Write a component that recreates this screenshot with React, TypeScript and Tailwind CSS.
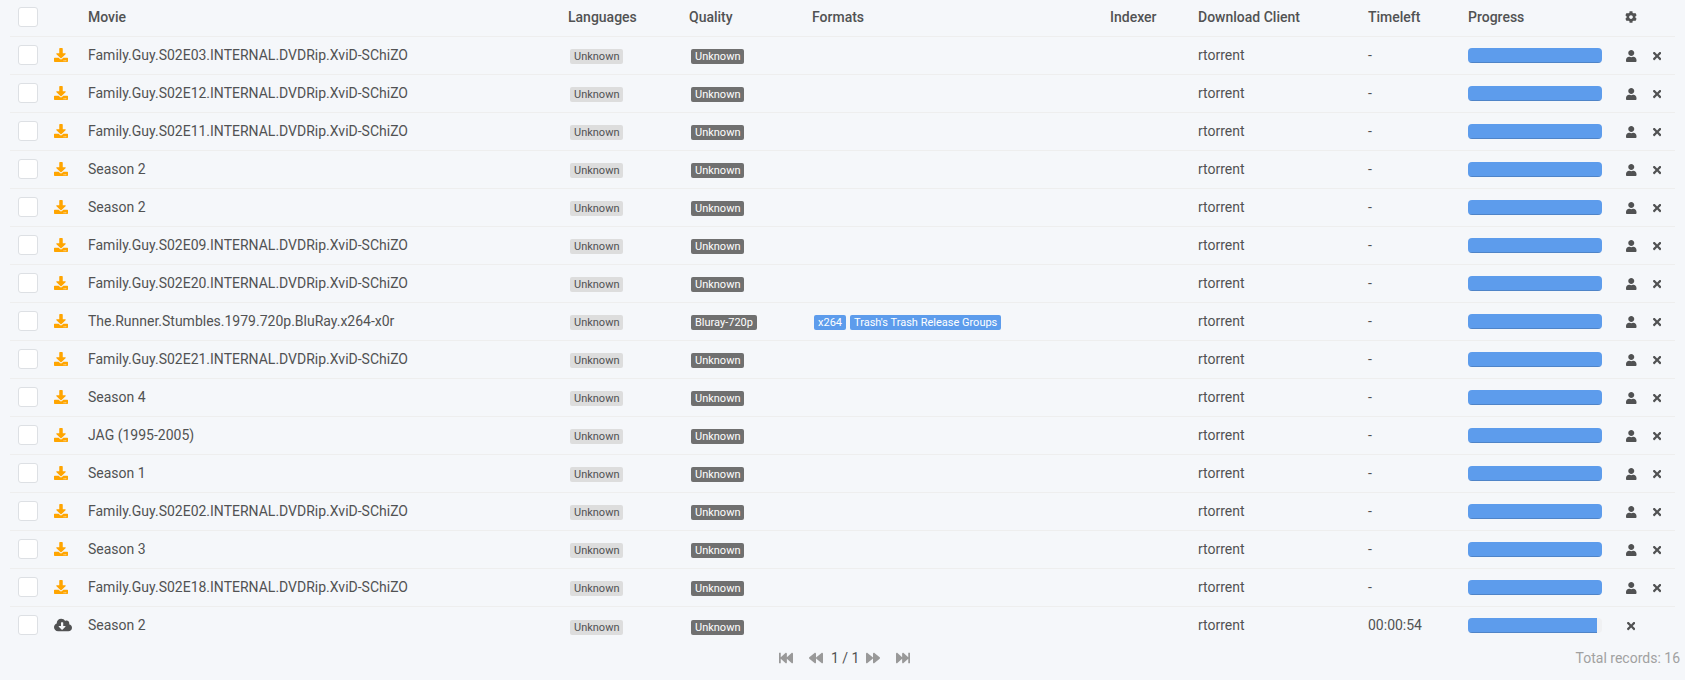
import React from "react";
import { FaDownload, FaCloudDownloadAlt, FaUser, FaTimes, FaCog, FaFastBackward, FaBackward, FaForward, FaFastForward } from "react-icons/fa";

const F = (s: string) => `Family.Guy.${s}.INTERNAL.DVDRip.XviD-SChiZO`;
const rows = [
  F("S02E03"), F("S02E12"), F("S02E11"), "Season 2", "Season 2", F("S02E09"), F("S02E20"),
  "The.Runner.Stumbles.1979.720p.BluRay.x264-x0r", F("S02E21"), "Season 4", "JAG (1995-2005)",
  "Season 1", F("S02E02"), "Season 3", F("S02E18"), "Season 2",
];

function Check() {
  return <div className="w-5 h-5 bg-white border border-[#dde0e4] rounded-[3px]" />;
}

function Label({ text, cls }: { text: string; cls: string }) {
  return (
    <span className={`inline-block h-[15px] leading-[15px] px-1 mx-0.5 mt-[1px] rounded-[2px] text-[11px] align-middle ${cls}`}>{text}</span>
  );
}

const th = "text-left font-medium px-2 pb-[1px] text-[14px]";
const td = "px-2 pt-[1px] pb-0 text-[14px]";
const tdUp = "px-2 pt-0 pb-[1px] text-[14px]";
const tdBar = "px-2 py-0 text-[14px]";

export default function App() {
  return (
    <div className="w-[1685px] h-[680px] bg-[#f5f7fa] text-[#515253] overflow-hidden font-['Roboto',sans-serif]">
      <div className="px-2.5">
        <table className="w-[1665px] table-fixed border-collapse">
          <thead>
            <tr className="h-[36px]">
              <th className={`${th} w-[36px]`}><Check /></th>
              <th className={`${th} w-[34px]`}></th>
              <th className={`${th} w-[480px]`}>Movie</th>
              <th className={`${th} w-[121px]`}>Languages</th>
              <th className={`${th} w-[123px]`}>Quality</th>
              <th className={`${th} w-[298px]`}>Formats</th>
              <th className={`${th} w-[88px]`}>Indexer</th>
              <th className={`${th} w-[170px]`}>Download Client</th>
              <th className={`${th} w-[100px]`}>Timeleft</th>
              <th className={`${th} w-[152px]`}>Progress</th>
              <th className={`${th} w-[63px]`}><FaCog className="ml-[5px] w-[12px] h-[12px]" /></th>
            </tr>
          </thead>
          <tbody>
            {rows.map((name, i) => {
              const last = i === rows.length - 1;
              const runner = i === 7;
              return (
                <tr key={i} className="h-[38px] border-t border-[#eeeeee]">
                  <td className={tdUp}><Check /></td>
                  <td className={tdUp}>
                    {last ? (
                      <FaCloudDownloadAlt className="w-[18px] h-[18px] text-[#515253] -ml-[0.5px]" />
                    ) : (
                      <FaDownload className="w-[14px] h-[14px] text-[#ffa500]" />
                    )}
                  </td>
                  <td className={td}>{name}</td>
                  <td className={td}><Label text="Unknown" cls="bg-[#dddddd] text-[#515253]" /></td>
                  <td className={td}><Label text={runner ? "Bluray-720p" : "Unknown"} cls="bg-[#707070] text-white" /></td>
                  <td className={td}>
                    {runner && (
                      <div className="flex">
                        <Label text="x264" cls="bg-[#5d9cec] text-white !ml-0.5 !mr-0" />
                        <Label text="Trash's Trash Release Groups" cls="bg-[#5d9cec] text-white !ml-1 !mr-0" />
                      </div>
                    )}
                  </td>
                  <td className={td}></td>
                  <td className={td}>rtorrent</td>
                  <td className={td}>{last ? "00:00:54" : "-"}</td>
                  <td className={tdBar}>
                    <div className="w-[134px] h-[15px] rounded-[4px] bg-[#f0f1f3] overflow-hidden">
                      <div className={`h-full bg-[#5d9cec] shadow-[inset_0_-1px_0_rgba(0,0,0,0.15)] ${last ? "w-[129px]" : "w-full"}`} />
                    </div>
                  </td>
                  <td className={td}>
                    <div className="flex items-center">
                      {last ? (
                        <FaTimes className="ml-[7px] w-[8.25px] h-[12px] text-[#515253]" />
                      ) : (
                        <>
                          <FaUser className="ml-[6px] w-[10.5px] h-[12px] text-[#515253]" />
                          <FaTimes className="ml-[16.5px] w-[8.25px] h-[12px] text-[#515253]" />
                        </>
                      )}
                    </div>
                  </td>
                </tr>
              );
            })}
          </tbody>
        </table>
        <div className="flex items-center justify-between h-[30px] -mt-[1px] text-[14px]">
          <div className="flex items-center ml-[769px] text-[#999999]">
            <FaFastBackward className="w-[14px] h-[14px]" />
            <FaBackward className="w-[14px] h-[14px] ml-4" />
            <span className="ml-[8px] mr-[7px] text-[#515253]">1 / 1</span>
            <FaForward className="w-[14px] h-[14px]" />
            <FaFastForward className="w-[14px] h-[14px] ml-4" />
          </div>
          <div className="text-[#a1a1a1] mr-[-5px]">Total records: 16</div>
        </div>
      </div>
    </div>
  );
}
